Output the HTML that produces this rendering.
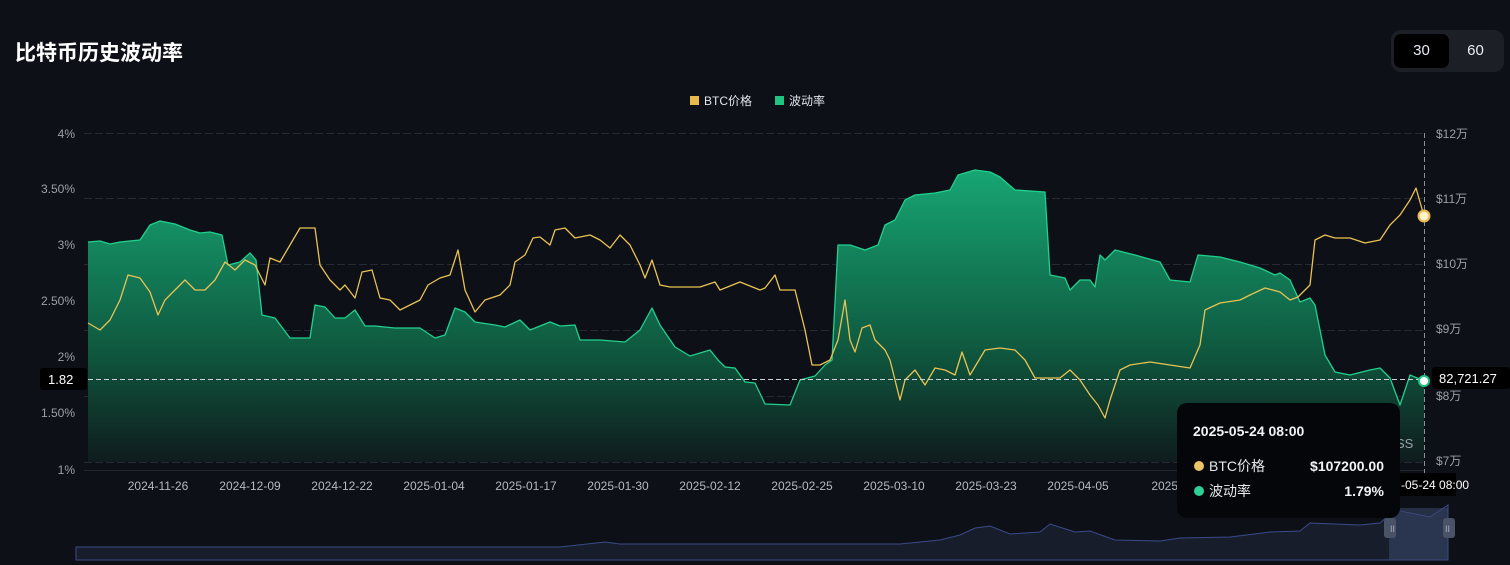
<!DOCTYPE html>
<html><head><meta charset="utf-8"><style>
html,body{margin:0;padding:0;background:#0d1016;width:1510px;height:565px;overflow:hidden;font-family:"Liberation Sans","Noto Sans CJK SC",sans-serif;}
.t{position:absolute;left:15px;top:37px;font-size:21px;font-weight:bold;color:#fff;}
.tg{position:absolute;left:1391px;top:30px;width:113px;height:42px;background:#1c1f26;border-radius:10px;}
.tg div{position:absolute;top:4px;height:34px;line-height:34px;width:55px;text-align:center;color:#e8ecf2;font-size:15px;}
</style></head><body>
<div class="t">比特币历史波动率</div>
<div class="tg"><div style="left:3px;background:#000;border-radius:7px">30</div><div style="left:57px">60</div></div>
<svg width="1510" height="565" style="position:absolute;left:0;top:0" font-family="Liberation Sans, Noto Sans CJK SC, sans-serif">
<defs>
<linearGradient id="g" gradientUnits="userSpaceOnUse" x1="0" y1="170" x2="0" y2="465">
<stop offset="0" stop-color="#17a674"/><stop offset="0.6" stop-color="#0f5a40"/><stop offset="1" stop-color="#0f1a1c"/></linearGradient>
</defs>
<rect x="690" y="96" width="9" height="9" fill="#e8b84c"/>
<text x="704" y="105" font-size="12" fill="#dfe3ea">BTC价格</text>
<rect x="775" y="96" width="9" height="9" fill="#1fc485"/>
<text x="789" y="105" font-size="12" fill="#dfe3ea">波动率</text>
<g stroke="#262a33" stroke-width="1" stroke-dasharray="8 3">
<line x1="84" y1="133.5" x2="1424" y2="133.5"/><line x1="84" y1="198.5" x2="1424" y2="198.5"/><line x1="84" y1="264.5" x2="1424" y2="264.5"/><line x1="84" y1="330.5" x2="1424" y2="330.5"/><line x1="84" y1="396.5" x2="1424" y2="396.5"/><line x1="84" y1="462.5" x2="1424" y2="462.5"/>
</g>
<line x1="84" y1="470.5" x2="1424" y2="470.5" stroke="#22262e"/>
<g font-size="12" fill="#9aa0aa" text-anchor="end">
<text x="75" y="138">4%</text><text x="75" y="193">3.50%</text><text x="75" y="249">3%</text><text x="75" y="305">2.50%</text><text x="75" y="361">2%</text><text x="75" y="417">1.50%</text><text x="75" y="474">1%</text>
</g>
<g font-size="12" fill="#9aa0aa">
<text x="1436" y="138">$12万</text><text x="1436" y="203">$11万</text><text x="1436" y="268">$10万</text><text x="1436" y="333">$9万</text><text x="1436" y="400">$8万</text><text x="1436" y="465">$7万</text>
</g>
<path id="v" fill="url(#g)" stroke="none" d="M88,462 L88,242 L100,241 L110,244 L120,242 L140,240 L150,225 L160,221 L175,224 L190,230 L200,233 L210,232 L222,235 L228,265 L240,262 L250,253 L256,260 L262,315 L275,318 L290,338 L310,338 L315,305 L325,307 L335,318 L345,318 L355,310 L365,326 L375,326 L395,328 L420,328 L435,338 L445,335 L455,308 L465,312 L475,322 L495,325 L505,327 L520,320 L530,330 L550,322 L560,326 L575,325 L580,340 L600,340 L625,342 L640,330 L652,308 L660,325 L675,347 L690,356 L710,350 L718,360 L725,367 L735,368 L745,382 L755,383 L765,404 L790,405 L800,380 L815,376 L825,365 L832,360 L838,245 L850,245 L865,250 L878,245 L885,225 L895,220 L905,200 L915,195 L935,193 L950,190 L958,175 L975,170 L990,172 L1000,177 L1015,190 L1045,192 L1050,275 L1065,278 L1070,290 L1080,280 L1090,280 L1095,287 L1100,255 L1105,260 L1115,250 L1135,255 L1160,262 L1170,280 L1190,282 L1198,255 L1220,257 L1240,262 L1260,268 L1275,275 L1280,273 L1290,280 L1300,302 L1310,298 L1315,305 L1325,355 L1335,372 L1350,375 L1370,370 L1380,368 L1390,378 L1400,405 L1410,375 L1424,381 L1424,462 Z"/>
<polyline fill="none" stroke="#22d08e" stroke-width="1.3" stroke-linejoin="round" points="88,242 100,241 110,244 120,242 140,240 150,225 160,221 175,224 190,230 200,233 210,232 222,235 228,265 240,262 250,253 256,260 262,315 275,318 290,338 310,338 315,305 325,307 335,318 345,318 355,310 365,326 375,326 395,328 420,328 435,338 445,335 455,308 465,312 475,322 495,325 505,327 520,320 530,330 550,322 560,326 575,325 580,340 600,340 625,342 640,330 652,308 660,325 675,347 690,356 710,350 718,360 725,367 735,368 745,382 755,383 765,404 790,405 800,380 815,376 825,365 832,360 838,245 850,245 865,250 878,245 885,225 895,220 905,200 915,195 935,193 950,190 958,175 975,170 990,172 1000,177 1015,190 1045,192 1050,275 1065,278 1070,290 1080,280 1090,280 1095,287 1100,255 1105,260 1115,250 1135,255 1160,262 1170,280 1190,282 1198,255 1220,257 1240,262 1260,268 1275,275 1280,273 1290,280 1300,302 1310,298 1315,305 1325,355 1335,372 1350,375 1370,370 1380,368 1390,378 1400,405 1410,375 1424,381"/>
<polyline fill="none" stroke="#e8c253" stroke-width="1.3" stroke-linejoin="round" points="88,323 100,330 110,320 120,300 128,275 140,278 150,292 158,315 165,300 175,290 185,280 195,290 205,290 215,280 225,262 235,270 245,260 255,265 265,285 270,258 280,262 290,245 300,228 315,228 320,265 330,280 340,290 345,285 355,298 362,272 372,270 380,298 390,300 400,310 410,305 420,300 428,285 440,278 450,275 458,250 465,290 475,312 485,300 500,295 510,285 515,262 525,255 533,238 540,237 550,245 555,230 565,228 575,238 590,235 600,240 610,248 620,235 630,245 640,265 645,278 652,260 660,285 670,287 700,287 715,282 720,290 740,282 760,290 765,288 775,275 780,290 795,290 805,330 812,365 820,365 830,360 838,340 845,300 850,340 855,352 862,328 870,325 875,340 885,350 890,360 895,380 900,400 905,380 915,370 925,385 935,368 945,370 955,375 962,352 970,375 985,350 1000,348 1015,350 1025,360 1035,378 1045,378 1060,378 1070,370 1080,380 1090,395 1098,405 1105,418 1110,400 1120,370 1130,365 1150,362 1170,365 1190,368 1200,345 1205,310 1220,303 1240,300 1250,295 1265,288 1280,292 1290,300 1298,297 1310,285 1315,240 1325,235 1335,238 1350,238 1365,243 1380,240 1390,225 1400,215 1410,200 1416,188 1424,216"/>
<line x1="88" y1="379.5" x2="1424" y2="379.5" stroke="#c9d2d8" stroke-dasharray="5 3"/>
<line x1="1424.5" y1="133" x2="1424.5" y2="475" stroke="#8a9098" stroke-dasharray="5 3"/>
<circle cx="1424" cy="216" r="5.5" fill="#fff3c8" stroke="#e8b84c" stroke-width="2"/>
<circle cx="1424" cy="381" r="5" fill="#fff" stroke="#1fc485" stroke-width="2"/>
<rect x="40" y="368" width="47" height="22" rx="3" fill="#000"/>
<text x="48" y="384" font-size="13" fill="#fff">1.82</text>
<rect x="1432" y="367" width="78" height="22" rx="3" fill="#000"/>
<text x="1439" y="383" font-size="13" fill="#fff">82,721.27</text>
<g font-size="12" fill="#b4b9c2" text-anchor="middle">
<text x="158" y="490">2024-11-26</text><text x="250" y="490">2024-12-09</text><text x="342" y="490">2024-12-22</text><text x="434" y="490">2025-01-04</text><text x="526" y="490">2025-01-17</text><text x="618" y="490">2025-01-30</text><text x="710" y="490">2025-02-12</text><text x="802" y="490">2025-02-25</text><text x="894" y="490">2025-03-10</text><text x="986" y="490">2025-03-23</text><text x="1078" y="490">2025-04-05</text><text x="1170" y="490">2025-0</text>
</g>
<text x="1396" y="448" font-size="13" fill="#9aa0aa">SS</text>
<path fill="#181d2c" stroke="#3a4a8a" stroke-width="1" d="M76,560 L76,547 L560,547 L605,542 L620,544 L900,544 L940,540 L960,535 L975,528 L990,526 L1000,530 L1010,534 L1040,532 L1050,524 L1075,532 L1090,531 L1115,540 L1160,541 L1180,538 L1230,537 L1270,532 L1300,531 L1310,523 L1360,525 L1380,523 L1395,510 L1420,515 L1430,517 L1448,505 L1448,560 Z"/>
<rect x="1389" y="508" width="59" height="52" fill="#3a4870" opacity="0.55"/>
<rect x="1384" y="518" width="12" height="20" rx="3" fill="#4a5268"/><rect x="1443" y="518" width="12" height="20" rx="3" fill="#4a5268"/>
<text x="1390" y="532" font-size="9" fill="#aab">II</text><text x="1445" y="532" font-size="9" fill="#aab">II</text>
<rect x="1396" y="473" width="60" height="23" fill="#000"/>
<text x="1401" y="489" font-size="12" fill="#fff">-05-24 08:00</text>
<rect x="1177" y="403" width="223" height="115" rx="10" fill="#05060a"/>
<text x="1193" y="436" font-size="14" font-weight="bold" fill="#f0f2f5">2025-05-24 08:00</text>
<circle cx="1199" cy="466" r="5" fill="#ebc46a"/>
<text x="1209" y="471" font-size="14" fill="#e6e8ec">BTC价格</text>
<text x="1384" y="471" font-size="14" font-weight="bold" fill="#f0f2f5" text-anchor="end">$107200.00</text>
<circle cx="1199" cy="491" r="5" fill="#2fcf98"/>
<text x="1209" y="496" font-size="14" fill="#e6e8ec">波动率</text>
<text x="1384" y="496" font-size="14" font-weight="bold" fill="#f0f2f5" text-anchor="end">1.79%</text>
</svg>
</body></html>
